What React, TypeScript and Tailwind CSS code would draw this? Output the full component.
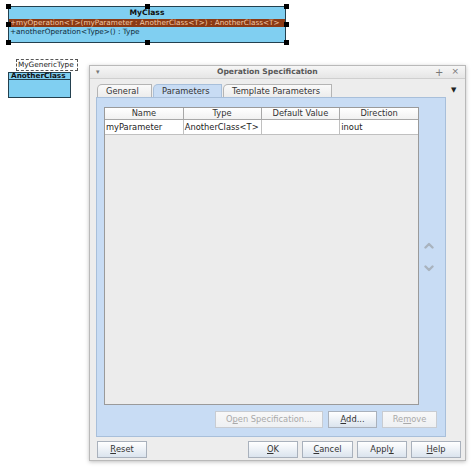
import React from "react";

const FONT = "font-['DejaVu_Sans',sans-serif]";

function Handle({ x, y }: { x: number; y: number }) {
  return <span className="absolute h-[5px] w-[5px] bg-black" style={{ left: x - 2, top: y - 2 }} />;
}

function Btn({ children, disabled, className = "" }: { children: React.ReactNode; disabled?: boolean; className?: string }) {
  return (
    <div
      className={`flex h-[17px] items-center justify-center border bg-gradient-to-b text-[8.3px] ${
        disabled ? "border-[#c8ccd2] from-[#f8f8f8] to-[#eef0f3] text-[#a9a9a9]" : "border-[#a9b1bc] from-[#ffffff] to-[#dbe4ee] text-[#333]"
      } ${className}`}
    >
      {children}
    </div>
  );
}

function Tab({ label, active, w }: { label: string; active?: boolean; w: number }) {
  return (
    <div
      style={{ width: w }}
      className={`flex h-[13px] items-center rounded-tl-[5px] border border-b-0 pl-[8px] text-[8.3px] text-[#333] ${
        active ? "border-[#a8bfda] bg-[#c8dcf4]" : "border-[#b4b4b4] bg-gradient-to-b from-[#fafafa] to-[#ececec]"
      }`}
    >
      {label}
    </div>
  );
}

function Chevron({ up }: { up?: boolean }) {
  return (
    <svg width="10" height="7" viewBox="0 0 10 7">
      <path
        d={up ? "M1.5 5.5 L5 2 L8.5 5.5" : "M1.5 1.5 L5 5 L8.5 1.5"}
        fill="none"
        stroke="#a9b3be"
        strokeWidth="2.4"
        strokeLinecap="round"
        strokeLinejoin="round"
      />
    </svg>
  );
}

export default function App() {
  const cols = [
    { name: "Name", w: 79 },
    { name: "Type", w: 78 },
    { name: "Default Value", w: 79 },
    { name: "Direction", w: 78 },
  ];
  const row = ["myParameter", "AnotherClass<T>", "", "inout"];

  return (
    <div className={`relative h-[467px] w-[474px] overflow-hidden bg-white ${FONT}`}>
      {/* MyClass */}
      <div className="absolute left-[8px] top-[6px] flex w-[278px] flex-col border border-[#23404f] bg-[#80cff1] pb-[6px] text-[7.3px] leading-[8px]">
        <div className="flex h-[12px] items-center justify-center text-[7.6px] font-bold text-[#111]">MyClass</div>
        <div className="flex h-[8px] items-center whitespace-nowrap bg-[#8b3a15] pl-[1px] text-[#f1c9a6]">
          +myOperation&lt;T&gt;(myParameter : AnotherClass&lt;T&gt;) : AnotherClass&lt;T&gt;
        </div>
        <div className="flex h-[9px] items-center whitespace-nowrap pl-[1px] text-[#0d2a3a]">
          +anotherOperation&lt;Type&gt;() : Type
        </div>
      </div>
      <Handle x={8} y={6} />
      <Handle x={147} y={6} />
      <Handle x={286} y={6} />
      <Handle x={8} y={24} />
      <Handle x={286} y={24} />
      <Handle x={8} y={42} />
      <Handle x={147} y={42} />
      <Handle x={286} y={42} />

      {/* AnotherClass */}
      <div className="absolute left-[8px] top-[72px] flex h-[26px] w-[63px] flex-col border border-[#23404f] bg-[#80cff1]">
        <div className="flex h-[6px] items-end pl-[2px] text-[7.3px] font-bold leading-[7px] text-[#111]">AnotherClass</div>
        <div className="border-t border-[#23404f]" />
      </div>
      <div className="absolute left-[16px] top-[59px] flex h-[12px] w-[62px] items-center border border-dashed border-[#555] bg-white px-[1px] text-[7.3px] text-[#222]">
        MyGenericType
      </div>

      {/* Dialog */}
      <div className="absolute left-[89px] top-[65px] flex h-[396px] w-[377px] flex-col border border-[#b9b9b9] bg-[#ededed] shadow-[0_1px_4px_rgba(0,0,0,0.25)]">
        <div className="flex h-[13px] items-center border-b border-[#cfcfcf] bg-gradient-to-b from-[#f6f6f6] to-[#e6e6e6] px-[6px] text-[8px] text-[#777]">
          <span className="text-[7px]">▾</span>
          <span className="flex-1 text-center text-[7.6px] font-bold text-[#585858]">Operation Specification</span>
          <span className="mr-[8px] text-[10px]">+</span>
          <span className="text-[9px]">×</span>
        </div>

        <div className="mt-[5px] flex flex-1 flex-col pl-[6px]">
          <div className="flex items-end">
            <div className="flex w-[350px] gap-[1px] pl-[1px]">
              <Tab label="General" w={55} />
              <Tab label="Parameters" active w={69} />
              <Tab label="Template Parameters" w={109} />
            </div>
            <span className="mb-[2px] ml-[5px] text-[7px] text-[#222]">▼</span>
          </div>

          <div className="flex h-[340px] w-[350px] flex-col border border-[#a8bfda] bg-[#c8dcf4] px-[7px] pt-[9px]">
            <div className="flex flex-1">
              <div className="flex w-[315px] flex-col border border-[#9a9a9a] bg-[#ececec]">
                <div className="flex h-[12px] bg-gradient-to-b from-[#ffffff] to-[#f0f0f0]">
                  {cols.map((c, i) => (
                    <div
                      key={c.name}
                      style={{ width: c.w }}
                      className={`flex items-center justify-center border-b border-[#a8a8a8] text-[8.3px] text-[#333] ${i < 3 ? "border-r" : ""}`}
                    >
                      {c.name}
                    </div>
                  ))}
                </div>
                <div className="flex h-[15px] bg-white">
                  {row.map((v, i) => (
                    <div
                      key={i}
                      style={{ width: cols[i].w }}
                      className={`flex items-center whitespace-nowrap border-b border-[#c0c0c0] pl-[1px] text-[8.3px] text-[#222] ${i < 3 ? "border-r" : ""}`}
                    >
                      {v}
                    </div>
                  ))}
                </div>
              </div>
              <div className="flex flex-1 flex-col items-center gap-[16px] pt-[135px]">
                <Chevron up />
                <Chevron />
              </div>
            </div>
            <div className="flex justify-end gap-[5px] pb-[8px] pr-[1px] pt-[6px]">
              <Btn disabled className="w-[108px]">
                O<u>p</u>en Specification...
              </Btn>
              <Btn className="w-[49px]">
                <u>A</u>dd...
              </Btn>
              <Btn disabled className="w-[55px]">
                Re<u>m</u>ove
              </Btn>
            </div>
          </div>

          <div className="flex items-center pt-[4px]">
            <Btn className="ml-[1px] w-[50px]">
              <u>R</u>eset
            </Btn>
            <div className="ml-auto mr-[4px] flex gap-[4px]">
              <Btn className="w-[50px]">
                <u>O</u>K
              </Btn>
              <Btn className="w-[51px]">
                <u>C</u>ancel
              </Btn>
              <Btn className="w-[50px]">
                Appl<u>y</u>
              </Btn>
              <Btn className="w-[50px]">
                <u>H</u>elp
              </Btn>
            </div>
          </div>
        </div>
      </div>
    </div>
  );
}
